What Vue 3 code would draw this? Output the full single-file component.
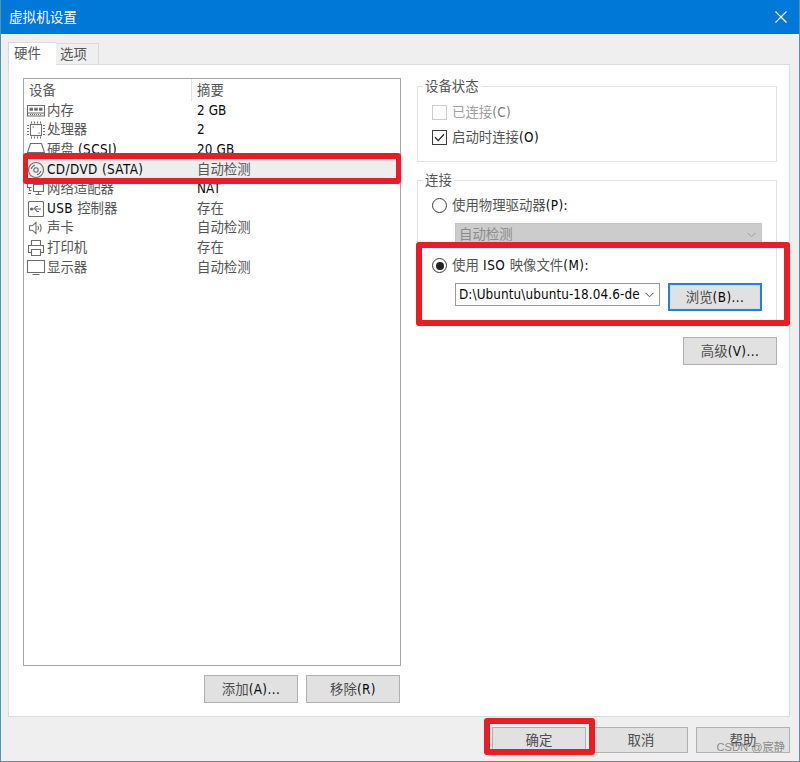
<script setup>
import { ref } from 'vue'

const devices = [
  { icon: 'memory', name: '内存', summary: '2 GB' },
  { icon: 'cpu', name: '处理器', summary: '2' },
  { icon: 'disk', name: '硬盘 (SCSI)', summary: '20 GB' },
  { icon: 'cd', name: 'CD/DVD (SATA)', summary: '自动检测' },
  { icon: 'network', name: '网络适配器', summary: 'NAT' },
  { icon: 'usb', name: 'USB 控制器', summary: '存在' },
  { icon: 'sound', name: '声卡', summary: '自动检测' },
  { icon: 'printer', name: '打印机', summary: '存在' },
  { icon: 'display', name: '显示器', summary: '自动检测' },
]
const selected = ref('cd')

// Splits a label into Latin and Chinese runs, which are styled differently.
const runs = (s) => s.match(/[\x00-\x7f]+|[^\x00-\x7f]+/g)
const isLatin = (s) => s.charCodeAt(0) < 128
</script>

<template>
  <div class="window">
    <header class="titlebar">
      <span>虚拟机设置</span>
      <svg class="close" width="12" height="12" viewBox="0 0 12 12"><path d="M.5 .5L11.5 11.5M11.5 .5L.5 11.5" /></svg>
    </header>

    <div class="tabs">
      <div class="tab active">硬件</div>
      <div class="tab">选项</div>
    </div>

    <main class="panel">
      <section class="left">
        <div class="list">
          <div class="head"><span class="c1">设备</span><span class="c2">摘要</span></div>
          <div
            v-for="d in devices"
            :key="d.icon"
            class="row"
            :class="{ selected: selected === d.icon }"
            @click="selected = d.icon"
          >
            <svg class="icon" width="20" height="18" viewBox="0 0 20 18">
              <g v-if="d.icon === 'memory'">
                <path d="M1.5 3.5h17v10.5h-17zM1.5 11h17" />
                <path class="thick" d="M3.5 7.2h3.5M8.2 7.2h3.6M13 7.2h3.5" />
                <path d="M4 12.5h12" stroke-dasharray="1 1" />
              </g>
              <g v-else-if="d.icon === 'cpu'">
                <rect x="4.5" y="3.5" width="11" height="11" />
                <path d="M5.5 .5v2M8.5 .5v2M11.5 .5v2M14.5 .5v2M5.5 15.5v2M8.5 15.5v2M11.5 15.5v2M14.5 15.5v2M1 4.5h2M1 7.5h2M1 10.5h2M1 13.5h2M17 4.5h2M17 7.5h2M17 10.5h2M17 13.5h2" />
                <path d="M6.5 6h1.5M12.3 12h1.5" />
              </g>
              <g v-else-if="d.icon === 'disk'">
                <path d="M4.5 2.5h11l3 9v4h-17v-4zM1.5 11.5h17" />
              </g>
              <g v-else-if="d.icon === 'cd'">
                <circle cx="10" cy="9" r="7.5" />
                <circle cx="10" cy="9" r="2.2" />
                <path d="M5.2 8A5 5 0 0 1 9 4.2M11 13.8A5 5 0 0 0 14.8 10" />
              </g>
              <g v-else-if="d.icon === 'network'">
                <path d="M7.5 4.5h10v7h-10zM12.5 11.5v3M9.5 14.5h6M5.5 2.5h-4v5h4M3.5 7.5v3h2M2 13.5h3" />
              </g>
              <g v-else-if="d.icon === 'usb'">
                <rect x="2.5" y="1.5" width="15" height="15" rx="1" />
                <path d="M5 9h10M8 9l2-2.5h2M9 9l2 2.5h2" />
                <circle class="fill" cx="5.5" cy="9" r="1" />
              </g>
              <g v-else-if="d.icon === 'sound'">
                <path d="M3.5 6.8h2.8L10 3.5v11L6.3 11.2H3.5zM11.8 6.8q1.5 2.2 0 4.4M13.8 5q2.6 4 0 8" />
              </g>
              <g v-else-if="d.icon === 'printer'">
                <path d="M5.5 6.5v-5h9v5M5 13.5H2.5v-7h15v7H15M5.5 10.5h9v6h-9z" />
              </g>
              <g v-else>
                <path d="M1.5 1.5h17v12h-17z" />
                <path d="M6.5 15.5h7" />
              </g>
            </svg>
            <span class="name"><span v-for="r in runs(d.name)" :key="r" :class="{ latin: isLatin(r) }">{{ r }}</span></span>
            <span class="c2" :class="{ latin: isLatin(d.summary) }">{{ d.summary }}</span>
          </div>
        </div>
        <div class="list-actions">
          <button class="btn">添加<b>(A)...</b></button>
          <button class="btn">移除<b>(R)</b></button>
        </div>
      </section>

      <section class="right">
        <div class="group status">
          <div class="legend">设备状态</div>
          <div class="option disabled"><span class="box"></span>已连接<b>(C)</b></div>
          <div class="option">
            <span class="box"><svg width="13" height="13" viewBox="0 0 13 13"><path d="M2 6.3l3.2 3.3L11 3.3" /></svg></span>启动时连接<b>(O)</b>
          </div>
        </div>

        <div class="group link">
          <div class="legend">连接</div>
          <div class="option"><span class="radio"></span>使用物理驱动器<b>(P):</b></div>
          <div class="combo off">
            自动检测
            <svg width="9" height="6" viewBox="0 0 9 6"><path d="M.5 .8L4.5 4.8L8.5 .8" /></svg>
          </div>
          <div class="option iso"><span class="radio on"></span>使用<b>&nbsp;ISO&nbsp;</b>映像文件<b>(M):</b></div>
          <div class="file">
            <div class="combo">
              <b class="path">D:\Ubuntu\ubuntu-18.04.6-de</b>
              <svg width="9" height="6" viewBox="0 0 9 6"><path d="M.5 .8L4.5 4.8L8.5 .8" /></svg>
            </div>
            <button class="btn focus">浏览<b>(B)...</b></button>
          </div>
        </div>

        <button class="btn advanced">高级<b>(V)...</b></button>
      </section>
    </main>

    <footer class="footer">
      <button class="btn">确定</button>
      <button class="btn">取消</button>
      <button class="btn">帮助</button>
    </footer>

    <div class="mark mark-device"></div>
    <div class="mark mark-iso"></div>
    <div class="mark mark-ok"></div>
    <div class="watermark">CSDN @宸静</div>
  </div>
</template>

<style>
body {
  margin: 0;
}
</style>

<style scoped>
* {
  box-sizing: border-box;
}
.window {
  position: relative;
  display: flex;
  flex-direction: column;
  width: 800px;
  height: 762px;
  overflow: hidden;
  background: #efefef;
  border: 1px solid #4e93b8;
  border-top: 0;
  color: #555;
  font: 13.4px/20px "DejaVu Sans Condensed", "Noto Sans CJK SC", sans-serif;
  white-space: nowrap;
}
b,
.row .latin {
  color: #080808;
  font-weight: 400;
  letter-spacing: 0.4px;
}
.row .c2.latin {
  letter-spacing: 0.1px;
}
.titlebar {
  display: flex;
  flex: none;
  align-items: center;
  justify-content: space-between;
  height: 34px;
  margin: 0 -1px;
  padding: 0 13px 0 9px;
  background: #0078d7;
  color: #fff;
  font-size: 13.6px;
}
.close {
  fill: none;
  stroke: #fff;
  stroke-width: 1.1;
}
.tabs {
  display: flex;
  flex: none;
  align-items: flex-end;
  height: 31px;
  padding: 0 8px 0 7px;
}
.tab {
  height: 22px;
  width: 43px;
  padding: 1px 0 0 4px;
  border: 1px solid #dadada;
  border-left: 0;
  border-bottom: 0;
}
.tab.active {
  z-index: 1;
  width: 48px;
  height: 24px;
  padding: 1px 0 0 5px;
  margin-bottom: -1px;
  border-left: 1px solid #dadada;
  border-right: 0;
  background: #fff;
}
.panel {
  display: flex;
  flex: none;
  gap: 16px;
  height: 653px;
  margin: -1px 9px 0 7px;
  padding: 13px 12px 0 14px;
  border: 1px solid #dcdcdc;
  background: #fff;
}
.left {
  width: 378px;
}
.list {
  height: 588px;
  border: 1px solid #a5a8ab;
}
.head {
  display: flex;
  height: 22px;
  padding: 2px 0 0 5px;
}
.head .c1 {
  width: 162px;
}
.head .c2 {
  margin-top: -2px;
  padding: 2px 0 0 5px;
  border-left: 1px solid #e2e2e2;
}
.row {
  display: flex;
  align-items: center;
  height: 19.6px;
  padding-left: 2px;
}
.row.selected {
  background: #eee;
}
.icon {
  flex: none;
  margin-right: 1px;
  fill: none;
  stroke: #6d6d6d;
  stroke-width: 1.1;
}
.icon .thick {
  stroke-width: 3;
}
.icon .fill {
  fill: #6d6d6d;
}
.name {
  width: 150px;
  white-space: pre;
}
.list-actions {
  display: flex;
  justify-content: flex-end;
  gap: 8px;
  padding: 9px 1px 0 0;
}
.btn {
  flex: none;
  width: 94px;
  height: 28px;
  padding: 2px 0 0;
  border: 1px solid #b0b0b0;
  background: #e1e1e1;
  color: #4d4d4d;
  font: inherit;
  text-align: center;
}
.right {
  display: flex;
  flex-direction: column;
  width: 360px;
  padding-top: 8px;
}
.group {
  border: 1px solid #e2e2e2;
}
.legend {
  width: max-content;
  height: 20px;
  margin: -10px 0 0 5px;
  padding: 0 2px;
  background: #fff;
}
.status {
  height: 76px;
}
.link {
  height: 145px;
  margin-top: 18px;
}
.option {
  display: flex;
  align-items: center;
  height: 25px;
  padding-left: 14px;
}
.status .legend {
  margin-bottom: 3px;
}
.link .legend {
  margin-bottom: 2px;
}
.disabled {
  color: #a0a0a0;
}
.disabled b {
  color: #7d7d7d;
}
.box,
.radio {
  display: flex;
  flex: none;
  width: 15px;
  height: 15px;
  margin-right: 5px;
  border: 1px solid #3c3c3c;
  background: #fff;
}
.box svg {
  fill: none;
  stroke: #222;
  stroke-width: 1.3;
}
.disabled .box {
  border-color: #ccc;
}
.radio {
  align-items: center;
  justify-content: center;
  border-radius: 50%;
}
.radio.on::after {
  width: 8px;
  height: 8px;
  border-radius: 50%;
  background: #222;
  content: "";
}
.combo {
  display: flex;
  align-items: center;
  justify-content: space-between;
  width: 205px;
  height: 23px;
  padding: 0 5px 0 3px;
  border: 1px solid #999;
  background: #fff;
}
.combo svg {
  fill: none;
  stroke: #555;
}
.combo .path {
  letter-spacing: 0.09px;
}
.combo.off {
  width: 307px;
  height: 24px;
  margin: 5px 0 0 37px;
  border-color: #c6c6c6;
  background: #ccc;
  color: #8b8b8b;
}
.combo.off svg {
  stroke: #a0a0a0;
}
.iso {
  margin-top: 6px;
}
.iso b {
  letter-spacing: 0.5px;
}
.file {
  display: flex;
  gap: 8px;
  padding: 5px 0 0 37px;
}
.btn.focus {
  padding: 1px 0 0;
  border: 2px solid #2583cf;
  box-shadow: inset 0 0 0 1px #c8e0f2;
}
.advanced {
  align-self: flex-end;
  margin-top: 12px;
}
.footer {
  display: flex;
  justify-content: flex-end;
  gap: 8px;
  padding: 10px 9px 0 0;
}
.footer .btn {
  height: 26px;
  padding-top: 1px;
}
.mark {
  position: absolute;
  border: 6px solid #eb1c24;
  border-radius: 3px;
  pointer-events: none;
}
.mark-device {
  left: 22px;
  top: 153px;
  width: 378px;
  height: 31px;
  border-right-width: 5px;
  border-left-width: 5px;
}
.mark-iso {
  left: 415px;
  top: 242px;
  width: 374px;
  height: 84px;
}
.mark-ok {
  left: 483px;
  top: 718px;
  width: 111px;
  height: 37px;
}
.watermark {
  position: absolute;
  right: 14px;
  bottom: 5px;
  color: #8c8c8c;
  font: 11.2px/18px "Liberation Sans", "Noto Sans CJK SC", sans-serif;
}
</style>
